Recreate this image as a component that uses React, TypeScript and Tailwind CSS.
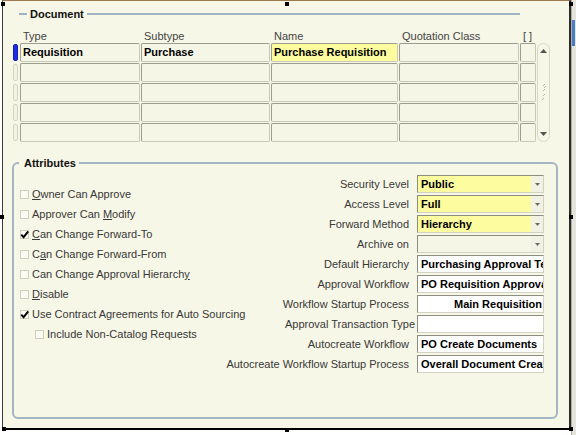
import React from "react";

const LABEL = "text-[11px] leading-[14px] text-[#383838] whitespace-nowrap";

const cols = [
  { title: "Type", w: 120, value: "Requisition" },
  { title: "Subtype", w: 129, value: "Purchase" },
  { title: "Name", w: 127, value: "Purchase Requisition", yellow: true },
  { title: "Quotation Class", w: 120, value: "" },
  { title: "[ ]", w: 16, value: "" },
];

const checks = [
  { label: <><u>O</u>wner Can Approve</>, checked: false },
  { label: <>Approver Can <u>M</u>odify</>, checked: false },
  { label: <><u>C</u>an Change Forward-To</>, checked: true },
  { label: <>C<u>a</u>n Change Forward-From</>, checked: false },
  { label: <>Can Change Approval Hierarch<u>y</u></>, checked: false },
  { label: <><u>D</u>isable</>, checked: false },
  { label: <>Use Contract Agreements for Auto Sourcing</>, checked: true },
  { label: <>Include Non-Catalog Requests</>, checked: false, indent: true },
];

type Field = {
  label: string;
  value: string;
  kind: "pop" | "text";
  yellow?: boolean;
  right?: boolean;
  tight?: boolean;
};

const fields: Field[] = [
  { label: "Security Level", value: "Public", kind: "pop", yellow: true },
  { label: "Access Level", value: "Full", kind: "pop", yellow: true },
  { label: "Forward Method", value: "Hierarchy", kind: "pop", yellow: true },
  { label: "Archive on", value: "", kind: "pop" },
  { label: "Default Hierarchy", value: "Purchasing Approval Team", kind: "text" },
  { label: "Approval Workflow", value: "PO Requisition Approval", kind: "text" },
  { label: "Workflow Startup Process", value: "Main Requisition", kind: "text", right: true },
  { label: "Approval Transaction Type", value: "", kind: "text", tight: true },
  { label: "Autocreate Workflow", value: "PO Create Documents", kind: "text" },
  {
    label: "Autocreate Workflow Startup Process",
    value: "Overall Document Creation",
    kind: "text",
  },
];

function Checkbox({ checked }: { checked: boolean }) {
  return (
    <div className="relative w-[9px] h-[9px] shrink-0 border border-[#cfcfc0] bg-[#fbfbf3]">
      {checked && (
        <svg
          viewBox="0 0 9 9"
          className="absolute left-[-1px] top-[-1px] w-[9px] h-[9px]"
        >
          <path
            d="M1.3 4.6 L3.6 7.2 L8.2 1.4"
            fill="none"
            stroke="#000"
            strokeWidth="1.9"
          />
        </svg>
      )}
    </div>
  );
}

function Handle({ pos }: { pos: string }) {
  return <div className={`absolute w-[4px] h-[4px] bg-black ${pos}`} />;
}

export default function App() {
  return (
    <div className="relative w-[576px] h-[435px] overflow-hidden bg-white font-['Liberation_Sans',Arial,sans-serif]">
      <div className="flex">
        {/* form canvas */}
        <div className="ml-[2px] w-[569px] h-[430px] shrink-0 bg-[#f7f7e7] border-l border-l-[#3c3c3c] border-t border-t-[#a07850] border-r-2 border-r-[#2c2c2c] border-b-2 border-b-black">
          {/* Document header */}
          <div className="mt-[6px] h-[14px] flex items-center pl-[16px]">
            <div className="w-[8px] h-[2px] bg-[#9fb3c2]" />
            <div className="px-[3px] text-[11px] leading-[14px] font-bold text-[#111]">
              Document
            </div>
            <div className="w-[433px] h-[2px] bg-[#9fb3c2]" />
          </div>

          {/* column headers */}
          <div className="mt-[8px] h-[14px] flex gap-[1px] pl-[17px]">
            {cols.map((c) => (
              <div
                key={c.title}
                style={{ width: c.w }}
                className="pl-[3px] text-[11px] leading-[14px] text-[#444] whitespace-nowrap"
              >
                {c.title}
              </div>
            ))}
          </div>

          {/* rows */}
          <div className="flex pl-[10px]">
            <div className="flex flex-col gap-[1px]">
              {[0, 1, 2, 3, 4].map((r) => (
                <div key={r} className="flex items-center h-[19px]">
                  <div
                    className={`w-[5px] h-[17px] rounded-[2px] ${
                      r === 0
                        ? "bg-[#1e2ce6] border border-[#1420b0]"
                        : "border border-[#d4d4c2] bg-[#f3f3e3]"
                    }`}
                  />
                  <div className="ml-[2px] flex gap-[1px] h-full">
                    {cols.map((c) => (
                      <div
                        key={c.title}
                        style={{ width: c.w }}
                        className={`h-full rounded-[2px] border border-[#c9c9b8] border-t-[#9d9d8d] border-l-[#9d9d8d] px-[2px] text-[11px] leading-[17px] font-bold text-black overflow-hidden whitespace-nowrap ${
                          r === 0 && c.yellow ? "bg-[#fdfd9f]" : "bg-[#f6f6e6]"
                        }`}
                      >
                        {r === 0 ? c.value : ""}
                      </div>
                    ))}
                  </div>
                </div>
              ))}
            </div>
            {/* scrollbar */}
            <div className="ml-[1px] w-[13px] h-[99px] rounded-full border border-[#dadac4] bg-[#f7f7e7] flex flex-col items-center justify-between py-[5px]">
              <svg viewBox="0 0 7 4" className="w-[7px] h-[4px]">
                <path d="M0 4 L3.5 0 L7 4 Z" fill="#555" />
              </svg>
              <svg viewBox="0 0 7 20" className="w-[7px] h-[20px]">
                <path
                  d="M5 1 L3 3 M5 6 L3 8 M5 11 L3 13 M4 15 L2 17 M6 3 L4 5"
                  stroke="#b8b8a0"
                  strokeWidth="1"
                />
              </svg>
              <svg viewBox="0 0 7 4" className="w-[7px] h-[4px]">
                <path d="M0 0 L7 0 L3.5 4 Z" fill="#555" />
              </svg>
            </div>
          </div>

          {/* Attributes */}
          <fieldset className="ml-[9px] mt-[14px] w-[546px] h-[263px] min-w-0 rounded-[6px] border-2 border-[#a3b6c4]">
            <legend className="ml-[5px] pl-[5px] pr-[3px] text-[11px] leading-[14px] font-bold text-[#111]">
              Attributes
            </legend>
            <div className="flex">
              <div className="w-[200px] shrink-0 pl-[6px] pt-[14px] flex flex-col">
                {checks.map((c, i) => (
                  <div
                    key={i}
                    className={`h-[20px] flex items-center ${
                      c.indent ? "pl-[15px]" : ""
                    }`}
                  >
                    <Checkbox checked={c.checked} />
                    <span className={`ml-[3px] ${LABEL}`}>{c.label}</span>
                  </div>
                ))}
              </div>
              <div className="flex-1 min-w-0 pr-[12px] pt-[5px] flex flex-col gap-[2px]">
                {fields.map((f) => (
                  <div key={f.label} className="h-[18px] flex items-center justify-end">
                    <span className={LABEL}>{f.label}</span>
                    <div
                      className={`${
                        f.tight ? "ml-[2px]" : "ml-[8px]"
                      } w-[127px] h-[18px] shrink-0 flex border border-[#d2d2c2] border-t-[#8e8e80] border-l-[#8e8e80] ${
                        f.kind === "text"
                          ? "bg-white"
                          : f.yellow
                          ? "bg-[#fdfd9f]"
                          : "bg-[#f6f6e6]"
                      }`}
                    >
                      <div
                        className={`flex-1 min-w-0 px-[3px] text-[11px] leading-[16px] font-bold text-black overflow-hidden whitespace-nowrap ${
                          f.right ? "text-right pr-[1px]" : ""
                        }`}
                      >
                        {f.value}
                      </div>
                      {f.kind === "pop" && (
                        <div className="w-[12px] h-full bg-[#f2f2e4] flex items-center justify-center">
                          <svg viewBox="0 0 5 3" className="w-[5px] h-[3px]">
                            <path d="M0 0 L5 0 L2.5 3 Z" fill="#6a6a6a" />
                          </svg>
                        </div>
                      )}
                    </div>
                  </div>
                ))}
              </div>
            </div>
          </fieldset>
        </div>

        {/* outer window edge */}
        <div className="w-[5px] h-[435px] bg-[#e4e4dc] border-l border-l-[#b0b0a8]">
          <div className="mt-[20px] h-[26px] w-[3px] bg-[#4a7cc4]" />
        </div>
      </div>

      {/* peek of the canvas below */}
      <div className="ml-[2px] w-[569px] h-[5px] overflow-hidden bg-[#eeeede] border-b border-b-[#7a7a7a] flex">
        <div className="ml-[62px] w-[1px] h-full bg-[#a0a090]" />
        <div className="ml-[10px] w-[1px] h-full bg-[#a0a090]" />
        <div className="ml-[66px] -mt-[3px] text-[11px] leading-[14px] font-bold text-black whitespace-nowrap">
          Transaction Reasons
        </div>
        <div className="ml-[86px] w-[46px] h-full bg-[#e2e2c0]" />
      </div>

      {/* selection handles */}
      <Handle pos="left-[1px] top-[2px]" />
      <Handle pos="left-[285px] top-[2px]" />
      <Handle pos="left-[569px] top-[2px]" />
      <Handle pos="left-[0px] top-[215px]" />
      <Handle pos="left-[569px] top-[215px]" />
      <Handle pos="left-[2px] top-[427px]" />
      <Handle pos="left-[285px] top-[428px]" />
      <Handle pos="left-[569px] top-[427px]" />
    </div>
  );
}
